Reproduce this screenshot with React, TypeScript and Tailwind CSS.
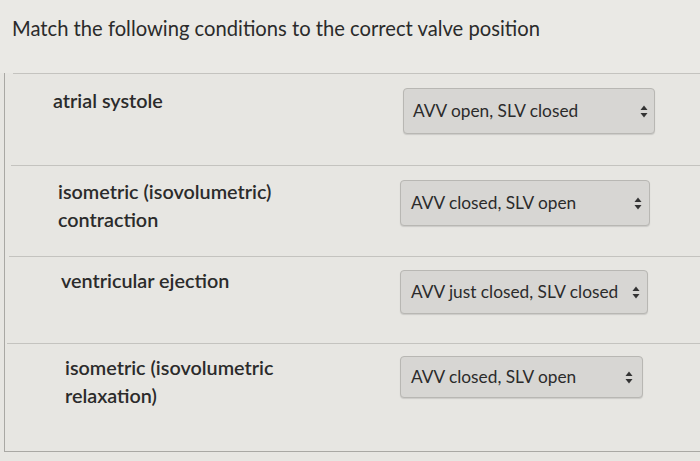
import React from "react";

const Arrows = () => (
  <svg width="8" height="13" viewBox="0 0 8 13" className="shrink-0">
    <path d="M4 0.5 L7.5 5 L0.5 5 Z" fill="#333" />
    <path d="M4 12.5 L7.5 8 L0.5 8 Z" fill="#333" />
  </svg>
);

type Row = {
  label: string[];
  value: string;
  rowCls: string;
  labelCls: string;
  selCls: string;
};

const rows: Row[] = [
  {
    label: ["atrial systole"],
    value: "AVV open, SLV closed",
    rowCls: "h-[92px] ml-[8px]",
    labelCls: "pl-[40px] pt-[12px] w-[390px]",
    selCls: "mt-[14px] w-[252px] h-[46px] pl-[9px] pr-[6px]",
  },
  {
    label: ["isometric (isovolumetric)", "contraction"],
    value: "AVV closed, SLV open",
    rowCls: "h-[91px] ml-[6px]",
    labelCls: "pl-[47px] pt-[11px] w-[389px]",
    selCls: "mt-[14px] w-[250px] h-[46px] pl-[10px] pr-[7px]",
  },
  {
    label: ["ventricular ejection"],
    value: "AVV just closed, SLV closed",
    rowCls: "h-[87px] ml-[4px]",
    labelCls: "pl-[52px] pt-[9px] w-[391px]",
    selCls: "mt-[13px] w-[248px] h-[44px] pl-[10px] pr-[7px]",
  },
  {
    label: ["isometric (isovolumetric", "relaxation)"],
    value: "AVV closed, SLV open",
    rowCls: "h-[108px] ml-[2px]",
    labelCls: "pl-[58px] pt-[9px] w-[393px]",
    selCls: "mt-[12px] w-[243px] h-[42px] pl-[10px] pr-[9px]",
  },
];

export default function App() {
  return (
    <div
      className="w-[700px] h-[461px] overflow-hidden bg-[#e7e6e2] text-[#2b2b2b]"
      style={{ fontFamily: "Lato, 'Open Sans', sans-serif" }}
    >
      <div className="pt-[14px] pl-[12px] h-[73px] text-[20.2px] leading-[28px] bg-[#eae9e5]">
        Match the following conditions to the correct valve position
      </div>
      <div className="ml-[4px] h-[379px] border-l border-b border-[#a9a8a4]">
        {rows.map((r, i) => (
          <div
            key={i}
            className={`flex items-start border-t border-[#c4c3bf] ${r.rowCls}`}
          >
            <div className={`text-[19.8px] leading-[28px] font-semibold ${r.labelCls}`}>
              {r.label.map((l, j) => (
                <div key={j}>{l}</div>
              ))}
            </div>
            <div
              className={`flex items-center justify-between rounded-[4px] border border-[#b8b7b3] bg-[#d7d6d3] shadow-[0_1px_1px_rgba(0,0,0,0.12)] text-[17.3px] ${r.selCls}`}
            >
              <span>{r.value}</span>
              <Arrows />
            </div>
          </div>
        ))}
      </div>
    </div>
  );
}
